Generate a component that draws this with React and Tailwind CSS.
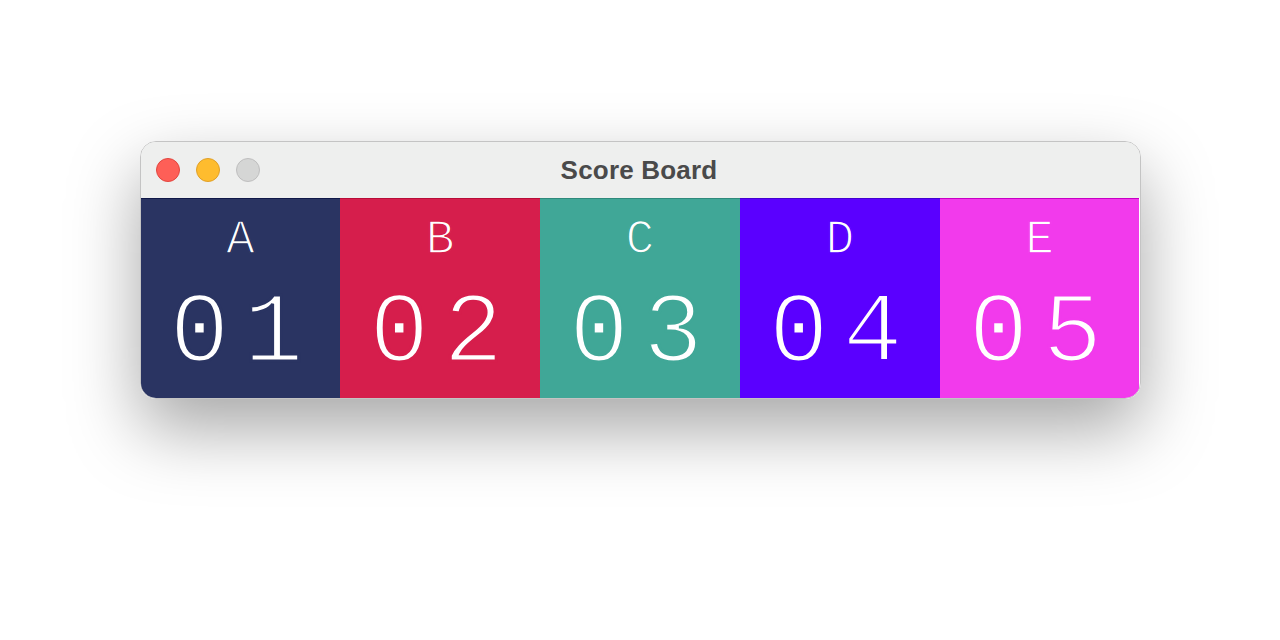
import React from 'react';

// each column carries its own outline colour so the text stroke thins the glyphs
const teams = [
  { name: 'A', score: '01', bg: 'bg-[#2a3462]', edge: 'border-[#101848]', thin: '[-webkit-text-stroke:3px_#2a3462]', thinLetter: '[-webkit-text-stroke:1.5px_#2a3462]' },
  { name: 'B', score: '02', bg: 'bg-[#d61e4c]', edge: 'border-[#b80c38]', thin: '[-webkit-text-stroke:3px_#d61e4c]', thinLetter: '[-webkit-text-stroke:1.5px_#d61e4c]' },
  { name: 'C', score: '03', bg: 'bg-[#40a797]', edge: 'border-[#2f8a7c]', thin: '[-webkit-text-stroke:3px_#40a797]', thinLetter: '[-webkit-text-stroke:1.5px_#40a797]' },
  { name: 'D', score: '04', bg: 'bg-[#5a00ff]', edge: 'border-[#4300d0]', thin: '[-webkit-text-stroke:3px_#5a00ff]', thinLetter: '[-webkit-text-stroke:1.5px_#5a00ff]' },
  { name: 'E', score: '05', bg: 'bg-[#f23aec]', edge: 'border-[#c800c4]', thin: '[-webkit-text-stroke:3px_#f23aec]', thinLetter: '[-webkit-text-stroke:1.5px_#f23aec]' },
];

const App = () => {
  return (
    <div className="w-[1280px] h-[640px] bg-white flex justify-center pt-[141px]">
      <div className="w-[1001px] h-[258px] rounded-[16px] overflow-hidden border border-[#c4c4c4] shadow-[0_30px_70px_rgba(0,0,0,0.35)] flex flex-col">
        {/* title bar */}
        <div className="relative h-[56px] bg-[#eeefee] flex items-center justify-center">
          <div className="absolute left-[15px] top-[16px] flex gap-[16px]">
            <span className="w-[24px] h-[24px] rounded-full bg-[#fe5f57] border border-[#e2463f]" />
            <span className="w-[24px] h-[24px] rounded-full bg-[#febc2e] border border-[#e0a028]" />
            <span className="w-[24px] h-[24px] rounded-full bg-[#d5d6d5] border border-[#bebebe]" />
          </div>
          <span className="text-[26px] font-bold text-[#4a4a4a] tracking-[0.2px] -ml-[2px]" style={{ fontFamily: '"Helvetica Neue", "Liberation Sans", Arial, sans-serif' }}>
            Score Board
          </span>
        </div>

        {/* score columns */}
        <div className="flex flex-1">
          {teams.map((t) => (
            <div
              key={t.name}
              className={`w-[200px] ${t.bg} border-t ${t.edge} flex flex-col items-center text-white`}
              style={{ fontFamily: '"Liberation Mono", "Courier New", monospace' }}
            >
              <div className={`text-[48px] leading-none mt-[17px] ${t.thinLetter}`}>{t.name}</div>
              <div className={`text-[100px] leading-none mt-[21px] tracking-[14px] pl-[6px] ${t.thin}`}>{t.score}</div>
            </div>
          ))}
        </div>
      </div>
    </div>
  );
};

export default App;
